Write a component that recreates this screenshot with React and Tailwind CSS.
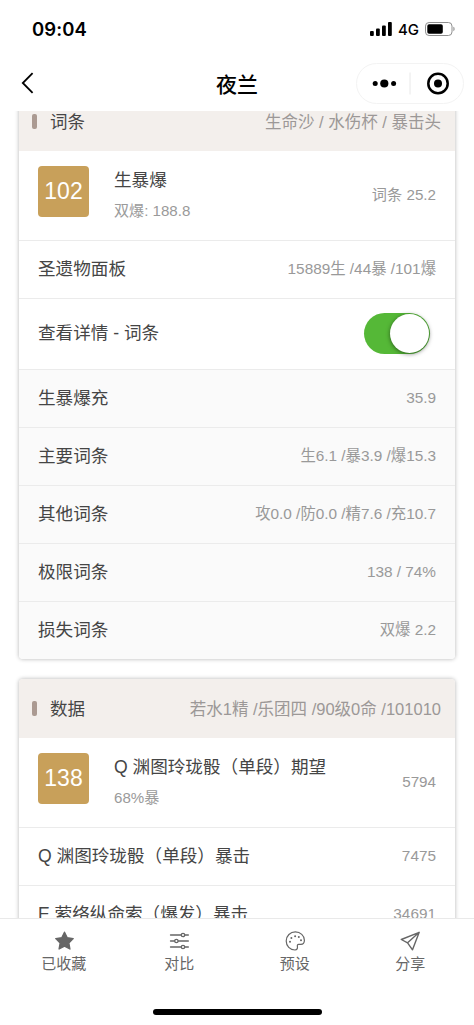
import React from "react";

function StatusBar() {
  return (
    <div className="flex h-[58px] shrink-0 items-center justify-between pr-[18px] pl-[32px]">
      <span className="font-['Inter','Noto_Sans_CJK_SC',sans-serif] text-[18.5px] leading-none font-semibold tracking-[0.1px] text-black">
        09:04
      </span>
      <div className="flex items-center">
        <svg className="h-[14px] w-[22px]" viewBox="0 0 22 14" fill="#000">
          <rect x="0" y="9" width="3.8" height="5" rx="1" />
          <rect x="6" y="6.5" width="3.8" height="7.5" rx="1" />
          <rect x="12" y="3.5" width="3.8" height="10.5" rx="1" />
          <rect x="18" y="0" width="3.8" height="14" rx="1" />
        </svg>
        <span className="ml-[6px] font-['Inter',sans-serif] text-[15px] leading-none font-medium text-black">
          4G
        </span>
        <svg className="ml-[6px] h-[14px] w-[31px]" viewBox="0 0 31 14" fill="none">
          <rect x="0.5" y="0.5" width="26.5" height="13" rx="3.6" stroke="#8e8e8e" />
          <rect x="2.3" y="2.3" width="15.5" height="9.4" rx="1.8" fill="#000" />
          <path d="M28.4 4.8c1.6.5 1.6 3.9 0 4.4z" fill="#8e8e8e" />
        </svg>
      </div>
    </div>
  );
}

function NavBar() {
  return (
    <div className="grid h-[53px] shrink-0 grid-cols-[108px_1fr_108px] items-center pr-[10px] pb-[3px] pl-[10px]">
      <svg className="ml-[10px] h-[24px] w-[16px]" viewBox="0 0 16 24" fill="none" stroke="#000" strokeWidth="1.8">
        <path d="M12.6 2.2 2.8 12l9.8 9.8" />
      </svg>
      <h1 className="pt-[2px] text-center text-[21px] leading-none font-medium text-black">夜兰</h1>
      <div className="flex h-[41px] items-center rounded-full border border-[#f3f3f3]">
        <svg className="h-[39px] w-[106px]" viewBox="0 0 106 39">
          <circle cx="18.2" cy="19.5" r="2.5" />
          <circle cx="27.3" cy="19.5" r="4.1" />
          <circle cx="36.6" cy="19.5" r="2.5" />
          <path d="M53 8.5v22" stroke="#e8e8e8" />
          <circle cx="81" cy="19.5" r="9.7" fill="none" stroke="#000" strokeWidth="2.5" />
          <circle cx="81" cy="19.5" r="4" />
        </svg>
      </div>
    </div>
  );
}

function Card({ title, note, children }) {
  return (
    <section className="overflow-hidden rounded-[4px] bg-white shadow-[0_0_4px_rgba(0,0,0,0.3)]">
      <header className="flex h-[59px] items-center bg-[#f3efec] pr-[14px] pl-[13px]">
        <i className="h-[15px] w-[5px] rounded-[2px] bg-[#ab9a92]" />
        <h2 className="ml-[13px] pt-[2px] text-[17.5px] leading-none text-[#454545]">{title}</h2>
        <span className="ml-auto pt-[1px] text-[16.5px] leading-none text-[#9c9897]">{note}</span>
      </header>
      {children}
    </section>
  );
}

function ScoreRow({ score, title, detail, value }) {
  return (
    <div className="flex h-[89px] items-center px-[19px]">
      <div className="mb-[9px] flex h-[51px] w-[51px] items-center justify-center rounded-[4px] bg-[#c8a05a] text-[23px] leading-none text-white">
        {score}
      </div>
      <div className="mb-[2px] ml-[25px] flex flex-col gap-[14px]">
        <span className="text-[17.6px] leading-[18px] text-[#454545]">{title}</span>
        <span className="text-[15.1px] leading-[16px] text-[#9a9a9a]">{detail}</span>
      </div>
      <span className="mb-[2px] ml-auto text-[15.2px] leading-none text-[#999]">{value}</span>
    </div>
  );
}

function Row({ label, value, muted }) {
  return (
    <div
      className={`flex h-[58px] items-center justify-between border-t border-[#ebebeb] px-[19px] ${muted ? "bg-[#fafafa]" : "bg-white"}`}
    >
      <span className="text-[17.6px] leading-none text-[#454545]">{label}</span>
      <span className="mb-[1px] text-[15.35px] leading-none text-[#999]">{value}</span>
    </div>
  );
}

function ToggleRow({ label }) {
  return (
    <div className="flex h-[71px] items-center justify-between border-t border-[#ebebeb] pr-[25px] pl-[19px]">
      <span className="text-[17.6px] leading-none text-[#454545]">{label}</span>
      <button
        type="button"
        role="switch"
        aria-checked="true"
        className="mb-[2px] flex h-[41px] w-[66px] items-center justify-end rounded-full bg-[#55b837] pr-[1px]"
      >
        <span className="h-[39px] w-[39px] rounded-full bg-white shadow-[0_1px_4px_rgba(0,0,0,0.5)]" />
      </button>
    </div>
  );
}

const substats = [
  ["生暴爆充", "35.9"],
  ["主要词条", "生6.1 /暴3.9 /爆15.3"],
  ["其他词条", "攻0.0 /防0.0 /精7.6 /充10.7"],
  ["极限词条", "138 / 74%"],
  ["损失词条", "双爆 2.2"],
];

function StarIcon() {
  return (
    <svg className="h-5 w-5" viewBox="0 0 20 20" fill="#666" stroke="#666" strokeWidth="1.4" strokeLinejoin="round">
      <path d="m10.500 1.200 2.700 5.500 6 .9-4.400 4.300 1.100 6.100-5.400-2.900-5.400 2.900 1.100-6.100-4.400-4.300 6-.9z" />
    </svg>
  );
}

function SlidersIcon() {
  return (
    <svg className="h-5 w-5" viewBox="0 0 20 20" fill="none" stroke="#666" strokeWidth="1.3" strokeLinecap="round">
      <path d="M1.500 4h10.600M15.900 4h3.500M1.500 10h4M9.300 10h10.100M1.500 16h10.600M15.900 16h3.500" />
      <circle cx="14" cy="4" r="1.700" />
      <circle cx="7.400" cy="10" r="1.700" />
      <circle cx="14" cy="16" r="1.700" />
    </svg>
  );
}

function PaletteIcon() {
  return (
    <svg className="h-5 w-5" viewBox="0 0 20 20" fill="none" stroke="#666" strokeWidth="1.2" strokeLinejoin="round">
      <path d="M10 19C5 19 1.200 14.900 1.200 10a9.100 9.100 0 0 1 9.200-9.100c5 0 9 3.700 9 8.300 0 2.600-1.200 4.200-3.600 4.200h-2.200c-1.200 0-1.400.8-1.200 1.900.3 1.900-.2 3.700-2.400 3.700z" />
      <g fill="#666" stroke="none">
        <circle cx="5" cy="10.800" r="1" />
        <circle cx="6.400" cy="7" r="1" />
        <circle cx="10.100" cy="5.200" r="1" />
        <circle cx="13.800" cy="6" r="1" />
        <circle cx="16" cy="9.200" r="1" />
      </g>
    </svg>
  );
}

function SendIcon() {
  return (
    <svg className="h-5 w-5" viewBox="0 0 20 20" fill="none" stroke="#666" strokeWidth="1.4" strokeLinejoin="round">
      <path d="M19.200 1.300 1.300 8.500l6.300 3.300 4.900 7zM19.200 1.300 7.600 11.800" />
    </svg>
  );
}

const tabs = [
  ["已收藏", StarIcon],
  ["对比", SlidersIcon],
  ["预设", PaletteIcon],
  ["分享", SendIcon],
];

export default function App() {
  return (
    <div className="flex h-[1025px] w-full flex-col overflow-hidden bg-white font-['Liberation_Sans','Noto_Sans_CJK_SC',sans-serif]">
      <StatusBar />
      <NavBar />
      <main className="min-h-0 flex-1 overflow-hidden px-[19px]">
        <div className="-mt-[19px] flex flex-col gap-[20px]">
          <Card title="词条" note="生命沙 / 水伤杯 / 暴击头">
            <ScoreRow score="102" title="生暴爆" detail="双爆: 188.8" value="词条 25.2" />
            <Row label="圣遗物面板" value="15889生 /44暴 /101爆" />
            <ToggleRow label="查看详情 - 词条" />
            {substats.map(([label, value]) => (
              <Row key={label} label={label} value={value} muted />
            ))}
          </Card>
          <Card title="数据" note="若水1精 /乐团四 /90级0命 /101010">
            <ScoreRow score="138" title="Q 渊图玲珑骰（单段）期望" detail="68%暴" value="5794" />
            <Row label="Q 渊图玲珑骰（单段）暴击" value="7475" />
            <Row label="E 萦络纵命索（爆发）暴击" value="34691" />
          </Card>
        </div>
      </main>
      <footer className="flex h-[107px] shrink-0 flex-col items-center border-t border-[#e9e9e9] bg-white">
        <nav className="grid w-[462px] grid-cols-4 pt-[12px]">
          {tabs.map(([label, Icon]) => (
            <div key={label} className="flex flex-col items-center gap-[5px]">
              <Icon />
              <span className="text-[15px] leading-[16px] text-[#666]">{label}</span>
            </div>
          ))}
        </nav>
        <div className="mt-auto mb-[10px] h-[6px] w-[169px] rounded-full bg-black" />
      </footer>
    </div>
  );
}
